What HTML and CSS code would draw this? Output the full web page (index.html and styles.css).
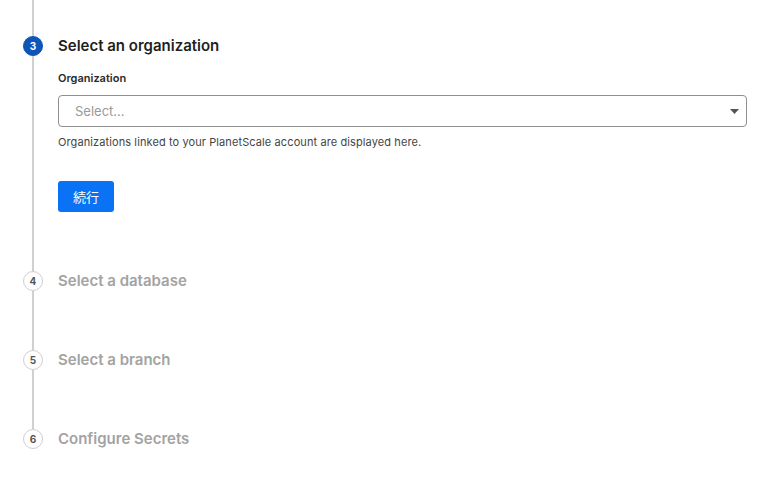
FILE: index.html
```html
<!DOCTYPE html>
<html lang="en">
<head>
<meta charset="utf-8">
<link rel="stylesheet" href="styles.css">
</head>
<body>
<div class="steps">
  <div class="lead"><div class="rail"><span class="line"></span></div></div>

  <div class="step active">
    <div class="rail"><span class="num">3</span><span class="line"></span></div>
    <div class="content">
      <h2 class="title">Select an organization</h2>
      <label class="label">Organization</label>
      <div class="select">
        <span class="placeholder">Select...</span>
        <svg class="caret" width="9" height="5" viewBox="0 0 9 5"><path d="M0 0H9L4.5 5Z" fill="#555"/></svg>
      </div>
      <p class="help">Organizations linked to your PlanetScale account are displayed here.</p>
      <button class="btn">続行</button>
    </div>
  </div>

  <div class="step">
    <div class="rail"><span class="num">4</span><span class="line"></span></div>
    <div class="content"><h2 class="title">Select a database</h2></div>
  </div>

  <div class="step">
    <div class="rail"><span class="num">5</span><span class="line"></span></div>
    <div class="content"><h2 class="title">Select a branch</h2></div>
  </div>

  <div class="step last">
    <div class="rail"><span class="num">6</span></div>
    <div class="content"><h2 class="title">Configure Secrets</h2></div>
  </div>
</div>
</body>
</html>
```
FILE: styles.css
```css
html, body {
  margin: 0;
  padding: 0;
  background: #ffffff;
  font-family: Inter, "Noto Sans CJK JP", "Liberation Sans", sans-serif;
  color: #1f1f1f;
}
.steps {
  display: flex;
  flex-direction: column;
  padding-left: 23px;
  padding-right: 21px;
}
.lead {
  display: flex;
  height: 36px;
}
.step {
  display: flex;
  gap: 15px;
}
.rail {
  width: 20px;
  display: flex;
  flex-direction: column;
  align-items: center;
  flex-shrink: 0;
}
.line {
  flex: 1;
  width: 2px;
  background: #d0d0d0;
}
.num {
  width: 20px;
  height: 20px;
  box-sizing: border-box;
  border-radius: 50%;
  border: 1px solid #cfcfcf;
  display: flex;
  align-items: center;
  justify-content: center;
  font-size: 10px;
  font-weight: 700;
  color: #555555;
  background: #fff;
}
.active .num {
  background: #0f55b8;
  border-color: #0f55b8;
  color: #ffffff;
}
.content {
  flex: 1;
  display: flex;
  flex-direction: column;
  align-items: flex-start;
  padding-bottom: 59px;
}
.last .content { padding-bottom: 20px; }
.title {
  margin: 0;
  font-size: 15px;
  line-height: 20px;
  font-weight: 600;
  color: #a3a3a3;
}
.active .title { color: #1f1f1f; }
.label {
  margin-top: 14px;
  font-size: 11px;
  line-height: 16px;
  font-weight: 600;
  color: #2a2a2a;
}
.select {
  margin-top: 9px;
  align-self: stretch;
  height: 32px;
  box-sizing: border-box;
  border: 1px solid #8f8f8f;
  border-radius: 4px;
  display: flex;
  align-items: center;
  justify-content: space-between;
  padding: 0 7px 0 16px;
}
.placeholder {
  font-size: 13px;
  color: #9a9a9a;
}
.caret { display: block; }
.help {
  margin: 7px 0 0;
  font-size: 11px;
  line-height: 16px;
  letter-spacing: 0.1px;
  color: #444444;
}
.btn {
  margin-top: 31px;
  width: 56px;
  height: 31px;
  border: none;
  border-radius: 3px;
  background: #0a72f5;
  color: #ffffff;
  font-family: "Noto Sans CJK JP", sans-serif;
  font-size: 13px;
  padding: 0;
}
```
